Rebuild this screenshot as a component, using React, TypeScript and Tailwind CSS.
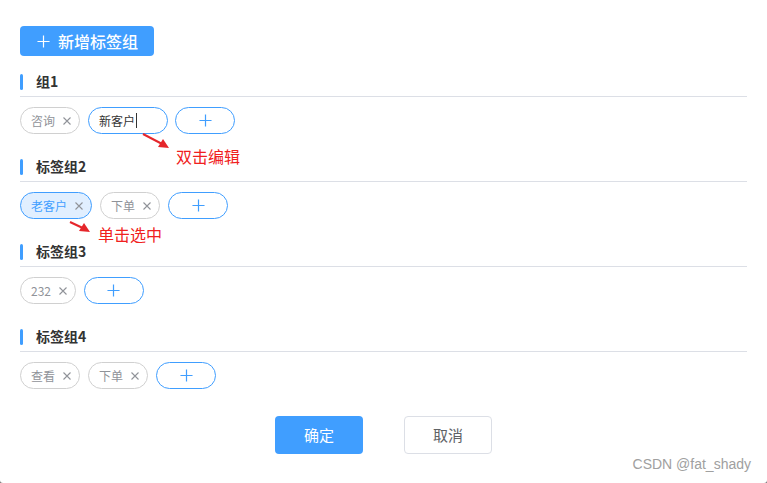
import React, { useState } from 'react';

interface TagGroup {
    name: string;
    tags: string[];
}

const font = { fontFamily: '"Noto Sans CJK SC", "Noto Sans", sans-serif' };

const PlusIcon: React.FC<{ className?: string }> = ({ className }) => (
    <svg viewBox="0 0 14 14" className={className} fill="none" stroke="currentColor" strokeWidth="1.3">
        <path d="M7 0.5v13M0.5 7h13" />
    </svg>
);

const CloseIcon: React.FC = () => (
    <svg viewBox="0 0 8 8" className="w-[8px] h-[8px]" fill="none" stroke="currentColor" strokeWidth="1.1">
        <path d="M0.5 0.5l7 7M7.5 0.5l-7 7" />
    </svg>
);

const Arrow: React.FC<{ className: string; w: number; h: number }> = ({ className, w, h }) => (
    <svg className={className} width={w + 4} height={h + 4} viewBox={`0 0 ${w + 4} ${h + 4}`}>
        <line x1="1" y1="1" x2={w} y2={h} stroke="#e5262b" strokeWidth="2" />
        <polygon points={`${w + 3},${h + 2} ${w - 8},${h + 1} ${w - 3},${h - 7}`} fill="#e5262b" />
    </svg>
);

const App: React.FC = () => {
    const [groups] = useState<TagGroup[]>([
        { name: '组1', tags: ['咨询'] },
        { name: '标签组2', tags: ['老客户', '下单'] },
        { name: '标签组3', tags: ['232'] },
        { name: '标签组4', tags: ['查看', '下单'] },
    ]);
    const selected = '老客户';

    return (
        <div className="w-[767px] h-[483px] bg-[#7a7a7a]" style={font}>
            <div className="relative w-full h-full bg-white rounded-b-[3px] px-5 pt-[26px]">
                <button className="h-[30px] pl-[17px] pr-[16px] bg-[#409eff] text-white rounded-[4px] flex items-center gap-[8px] text-[16px] font-medium">
                    <PlusIcon className="w-[13px] h-[13px]" />
                    新增标签组
                </button>

                {groups.map((g, gi) => (
                    <div key={gi} className={gi === 0 ? 'mt-[17px]' : 'mt-[24px]'}>
                        <div className="flex items-center h-[17px]">
                            <div className="w-[3px] h-[16px] bg-[#409eff] rounded-[2px]" />
                            <div className="ml-[13px] text-[14px] font-bold text-[#333]">{g.name}</div>
                        </div>
                        <div className="mt-[6px] border-t border-[#dcdfe6]" />
                        <div className="mt-[10px] flex items-center gap-[8px] h-[27px]">
                            {g.tags.map((t, ti) => {
                                const on = gi === 1 && t === selected;
                                return (
                                    <div
                                        key={ti}
                                        className={
                                            on
                                                ? 'h-[27px] pl-[10px] pr-[8px] rounded-full border border-[#409eff] bg-[#e1efff] text-[#409eff] text-[12px] flex items-center gap-[8px]'
                                                : 'h-[27px] pl-[10px] pr-[8px] rounded-full border border-[#d0d0d0] text-[#909399] text-[12px] flex items-center gap-[8px]'
                                        }
                                    >
                                        <span>{t}</span>
                                        <span className="text-[#909399]"><CloseIcon /></span>
                                    </div>
                                );
                            })}
                            {gi === 0 && (
                                <div className="h-[27px] w-[80px] mr-[-1px] rounded-full border border-[#409eff] pl-[10px] flex items-center text-[12px] text-[#333]">
                                    新客户<span className="w-px h-[15px] bg-[#333] ml-px" />
                                </div>
                            )}
                            <div className="h-[27px] w-[60px] rounded-full border border-[#409eff] flex items-center justify-center text-[#409eff]">
                                <PlusIcon className="w-[13px] h-[13px]" />
                            </div>
                        </div>
                    </div>
                ))}

                <div className="mt-[27px] flex justify-center gap-[41px]">
                    <button className="w-[88px] h-[38px] rounded-[4px] bg-[#409eff] text-white text-[15px]">确定</button>
                    <button className="w-[88px] h-[38px] rounded-[4px] border border-[#dcdfe6] text-[#606266] text-[15px]">取消</button>
                </div>

                {/* annotations */}
                <Arrow className="absolute left-[142px] top-[133px]" w={24} h={13} />
                <div className="absolute left-[176px] top-[144px] text-[16px] text-[#f02020]">双击编辑</div>
                <Arrow className="absolute left-[69px] top-[221px]" w={18} h={9} />
                <div className="absolute left-[98px] top-[222px] text-[16px] text-[#f02020]">单击选中</div>

                <div className="absolute right-[16px] bottom-[8px] text-[14px] text-[#a0a0a0]" style={{ fontFamily: '"Liberation Sans", Arial, sans-serif' }}>
                    CSDN @fat_shady
                </div>
            </div>
        </div>
    );
};

export default App;
